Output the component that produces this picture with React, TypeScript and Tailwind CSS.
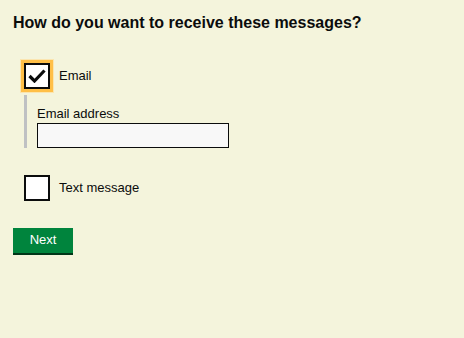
import React from "react";

export default function App() {
  return (
    <div className="w-[464px] h-[338px] bg-[#f4f4dc] px-[13px] pt-[13px] font-['Liberation_Sans',Arial,sans-serif] text-[#0b0c0c]">
      <h1 className="text-[16px] leading-[20px] font-bold">How do you want to receive these messages?</h1>
      <div className="mt-[27px] flex flex-col">
        <div className="flex items-center ml-[8px] h-[32px]">
          <div className="w-[32px] h-[32px] bg-[#ffbf47] p-[3px] shadow-[0_0_0_1px_#fbe5b0]">
            <div className="w-[26px] h-[26px] border-2 border-[#0b0c0c] bg-white flex items-center justify-center">
              <svg width="18" height="14" viewBox="0 0 18 14">
                <path d="M1.5 7 L6.5 12 L16.5 1.5" fill="none" stroke="#0b0c0c" strokeWidth="3.2" />
              </svg>
            </div>
          </div>
          <span className="ml-[6px] text-[13px] leading-[16px]">Email</span>
        </div>
        <div className="ml-[11px] mt-[3px] border-l-[3px] border-[#bfc1c3] pl-[10px] pt-[11px] h-[53px]">
          <div className="text-[13px] leading-[16px]">Email address</div>
          <div className="mt-[1px] w-[192px] h-[25px] border border-[#0b0c0c] bg-[#f8f8f8]"></div>
        </div>
        <div className="flex items-center ml-[11px] mt-[27px]">
          <div className="w-[26px] h-[26px] border-2 border-[#0b0c0c] bg-white"></div>
          <span className="ml-[9px] text-[13px] leading-[16px]">Text message</span>
        </div>
        <div className="mt-[26px]">
          <button className="w-[60px] h-[25px] bg-[#00843d] text-white text-[13px] leading-[16px] shadow-[0_2px_0_#003618]">Next</button>
        </div>
      </div>
    </div>
  );
}
